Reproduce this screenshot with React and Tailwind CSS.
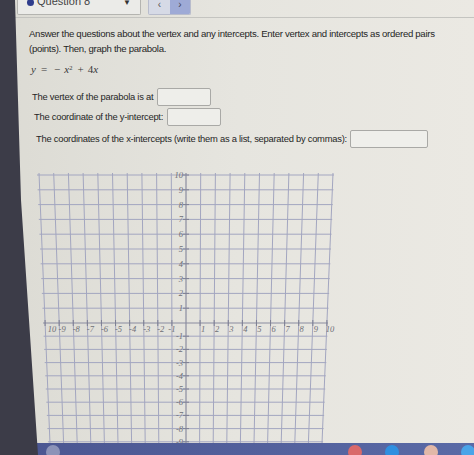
import React from "react";

const L = (y) => 39 + (y - 172) * 0.041;
const R = (y) => 333 - (y - 172) * 0.041;
const yAt = (v) => (v >= 0 ? 320 - 14.8 * v : 320 - 13.2 * v);
const xAt = (k, y) => L(y) + (k / 20) * (R(y) - L(y));

function Graph() {
  const OX = 30;
  const OY = 164;
  const top = yAt(10);
  const bottom = 441;
  const rows = [];
  for (let v = 10; v >= -9; v--) rows.push(v);
  const cols = [];
  for (let k = 0; k <= 20; k++) cols.push(k);
  const ax = 320;
  return (
    <svg width="310" height="279" viewBox={`${OX} ${OY} 310 279`} className="block">
      {cols.map((k) => (
        <line
          key={"c" + k}
          x1={xAt(k, top)}
          y1={top - 2}
          x2={xAt(k, bottom)}
          y2={bottom}
          stroke={k === 10 ? "#8a8ca0" : "#a3a6c0"}
          strokeWidth={k === 10 ? 1.2 : 1}
        />
      ))}
      {rows.map((v) => {
        const y = yAt(v);
        return (
          <line
            key={"r" + v}
            x1={L(y) - 2}
            y1={y}
            x2={R(y) + 1}
            y2={y}
            stroke={v === 0 ? "#8a8ca0" : "#a3a6c0"}
            strokeWidth={v === 0 ? 1.2 : 1}
          />
        );
      })}
      {rows
        .filter((v) => v !== 0)
        .map((v) => {
          const y = yAt(v);
          const x = xAt(10, y);
          return (
            <g key={"yl" + v}>
              <line x1={x - 3} y1={y} x2={x + 3} y2={y} stroke="#7d7f92" strokeWidth="1" />
              <text
                x={x - 3}
                y={y + 3}
                textAnchor="end"
                fontSize="8.5"
                fontStyle="italic"
                fill="#6e6e76"
                fontFamily="'Liberation Serif', serif"
              >
                {v}
              </text>
            </g>
          );
        })}
      {cols
        .filter((k) => k !== 10)
        .map((k) => {
          const v = k - 10;
          const x = xAt(k, ax);
          return (
            <g key={"xl" + k}>
              <line x1={x} y1={ax - 3} x2={x} y2={ax + 3} stroke="#7d7f92" strokeWidth="1" />
              <text
                x={k === 0 ? x + 7 : v === -1 ? x : x + 3}
                y={ax + 9}
                textAnchor="middle"
                fontSize="8.5"
                fontStyle="italic"
                fill="#6e6e76"
                fontFamily="'Liberation Serif', serif"
              >
                {k === 0 ? "10" : v}
              </text>
            </g>
          );
        })}
    </svg>
  );
}

export default function App() {
  return (
    <div
      className="relative w-[474px] h-[455px] overflow-hidden flex flex-col bg-gradient-to-r from-[#dcdbd4] via-[#e6e5df] to-[#ebe9e3] text-[#2a2a2a]"
      style={{ fontFamily: "'Liberation Sans', Arial, sans-serif" }}
    >
      {/* top bar */}
      <div className="flex items-start pl-[17px] h-[18px] border-b border-[#c4c4c0] shrink-0">
        <div className="w-[124px] h-[15px] border border-t-0 border-[#b4b4b0] bg-[#ebebe8] rounded-b-[2px] flex items-start px-[9px] overflow-hidden">
          <span className="w-[7px] h-[7px] rounded-full bg-[#2f3d8c] mt-[-1px] shrink-0"></span>
          <span className="ml-[3px] text-[11px] leading-[11px] mt-[-4px] text-[#444]">Question 8</span>
          <span className="ml-auto text-[8px] leading-[8px] mt-[-1px] text-[#333]">▼</span>
        </div>
        <div className="ml-[7px] flex h-[15px] rounded-b-[2px] overflow-hidden border border-t-0 border-[#b8bccc]">
          <div className="w-[21px] bg-[#d6dae6] flex justify-center text-[10px] leading-[10px] text-[#555]">‹</div>
          <div className="w-[20px] bg-[#9eaad6] flex justify-center text-[10px] leading-[10px] text-[#445]">›</div>
        </div>
      </div>

      {/* text */}
      <div className="pl-[29px] pt-[8px] text-[9.6px] leading-[15px] tracking-[-0.3px] text-[#262626]">
        <div className="whitespace-nowrap">
          Answer the questions about the vertex and any intercepts. Enter vertex and intercepts as ordered pairs
        </div>
        <div className="whitespace-nowrap">(points). Then, graph the parabola.</div>
      </div>

      <div
        className="pl-[31px] mt-[6px] text-[11px] leading-[14px] italic text-[#3a3a3a] whitespace-nowrap"
        style={{ fontFamily: "'Liberation Serif', serif" }}
      >
        y<span className="not-italic ml-[5px]">=</span>
        <span className="not-italic ml-[7px]">−</span>
        <span className="ml-[4px]">x</span>
        <sup className="text-[6.5px] not-italic">2</sup>
        <span className="not-italic ml-[5px]">+</span>
        <span className="not-italic ml-[4px]">4</span>x
      </div>

      <div className="flex flex-col mt-[12px] gap-[2px] text-[9.4px] tracking-[-0.25px] text-[#262626]">
        <div className="flex items-center pl-[32px] h-[18px]">
          <span className="whitespace-nowrap">The vertex of the parabola is at</span>
          <span className="ml-[4px] w-[54px] h-[18px] border border-[#a9a9a6] rounded-[2px] bg-[#eeeeea]"></span>
        </div>
        <div className="flex items-center pl-[34px] h-[18px]">
          <span className="whitespace-nowrap">The coordinate of the y-intercept:</span>
          <span className="ml-[4px] w-[54px] h-[18px] border border-[#a9a9a6] rounded-[2px] bg-[#eeeeea]"></span>
        </div>
        <div className="flex items-center pl-[36px] h-[18px] mt-[2px]">
          <span className="whitespace-nowrap">
            The coordinates of the x-intercepts (write them as a list, separated by commas):
          </span>
          <span className="ml-[3px] w-[78px] h-[18px] border border-[#a9a9a6] rounded-[2px] bg-[#efefeb]"></span>
        </div>
      </div>

      <div className="flex-1 min-h-0 mt-[19px] pl-[30px]">
        <Graph />
      </div>

      {/* taskbar */}
      <div className="h-[12px] shrink-0 bg-gradient-to-r from-[#4a5590] to-[#5a6aa6] flex items-start relative overflow-hidden">
        <span className="absolute left-[46px] top-[2px] w-[14px] h-[14px] rounded-full bg-[#8c93b8]"></span>
        <span className="absolute left-[348px] top-[2px] w-[14px] h-[14px] rounded-full bg-[#d9696a]"></span>
        <span className="absolute left-[385px] top-[2px] w-[14px] h-[14px] rounded-full bg-[#2f8fe0]"></span>
        <span className="absolute left-[424px] top-[2px] w-[14px] h-[14px] rounded-full bg-[#e2b8a8]"></span>
        <span className="absolute left-[461px] top-[2px] w-[14px] h-[14px] rounded-full bg-[#4aa4e8]"></span>
      </div>

      {/* monitor bezel */}
      <svg className="absolute left-0 top-0 pointer-events-none" width="40" height="455">
        <polygon points="0,0 15,0 21,200 38,455 0,455" fill="#3c3c48" />
      </svg>
    </div>
  );
}
